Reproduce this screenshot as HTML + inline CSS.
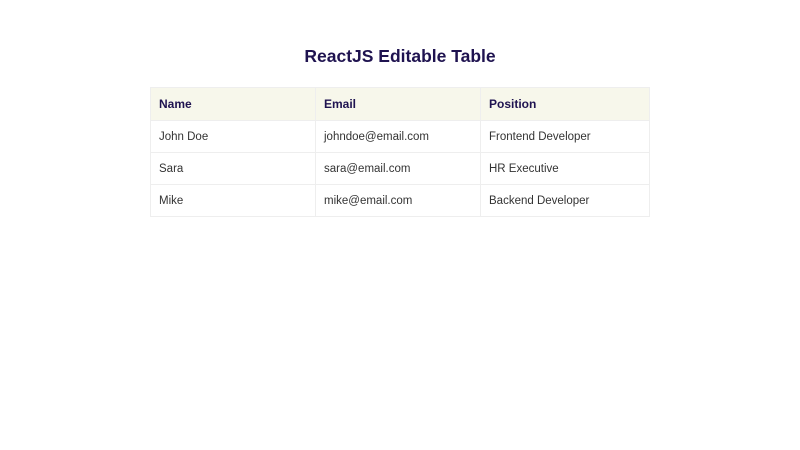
<!DOCTYPE html>
<html><head><style>
body{margin:0;background:#fff;font-family:"Liberation Sans",sans-serif;width:800px;height:450px;overflow:hidden}
h1{position:absolute;top:44px;left:0;width:800px;text-align:center;margin:0;font-size:17.5px;font-weight:bold;color:#1f1350;line-height:24px}
table{position:absolute;left:150px;top:87px;width:500px;border-collapse:collapse}
td,th{border:1px solid #eeeeee;height:31px;padding:0 0 0 8px;text-align:left;font-size:11.5px;color:#333}
th{background:#f7f7eb;color:#1f1350;font-weight:bold;font-size:12px;height:32px}
</style></head><body>
<h1>ReactJS Editable Table</h1>
<table>
<tr><th style="width:156px">Name</th><th style="width:156px">Email</th><th>Position</th></tr>
<tr><td>John Doe</td><td>johndoe@email.com</td><td>Frontend Developer</td></tr>
<tr><td>Sara</td><td>sara@email.com</td><td>HR Executive</td></tr>
<tr><td>Mike</td><td>mike@email.com</td><td>Backend Developer</td></tr>
</table>
</body></html>
